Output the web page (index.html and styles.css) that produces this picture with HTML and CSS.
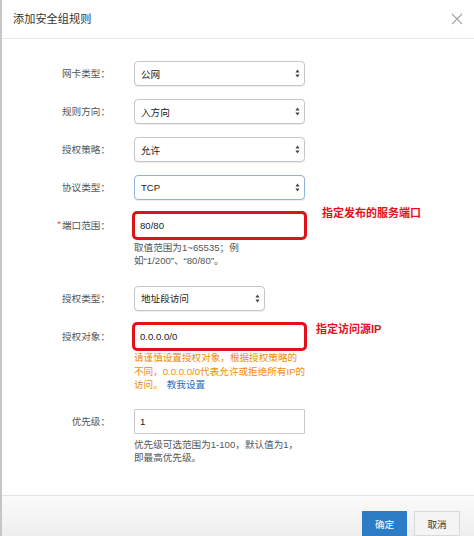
FILE: index.html
```html
<!DOCTYPE html>
<html lang="zh-CN">
<head>
<meta charset="utf-8">
<title>添加安全组规则</title>
<link rel="stylesheet" href="styles.css">
</head>
<body>
<div class="dialog">
  <div class="header">
    <span class="title">添加安全组规则</span>
    <svg class="close" width="12" height="12" viewBox="0 0 12 12"><path d="M1 1L11 11M11 1L1 11" stroke="#a8a8a8" stroke-width="1.2" fill="none"/></svg>
  </div>
  <div class="form">
    <div class="row">
      <div class="label">网卡类型：</div>
      <div class="field">
        <div class="select"><span>公网</span><svg class="arrows" width="5" height="9" viewBox="0 0 5 9"><path d="M0.4 3.4L2.5 0.4L4.6 3.4ZM0.4 5.6L2.5 8.6L4.6 5.6Z" fill="#444"/></svg></div>
      </div>
    </div>
    <div class="row">
      <div class="label">规则方向：</div>
      <div class="field">
        <div class="select"><span>入方向</span><svg class="arrows" width="5" height="9" viewBox="0 0 5 9"><path d="M0.4 3.4L2.5 0.4L4.6 3.4ZM0.4 5.6L2.5 8.6L4.6 5.6Z" fill="#444"/></svg></div>
      </div>
    </div>
    <div class="row">
      <div class="label">授权策略：</div>
      <div class="field">
        <div class="select"><span>允许</span><svg class="arrows" width="5" height="9" viewBox="0 0 5 9"><path d="M0.4 3.4L2.5 0.4L4.6 3.4ZM0.4 5.6L2.5 8.6L4.6 5.6Z" fill="#444"/></svg></div>
      </div>
    </div>
    <div class="row">
      <div class="label">协议类型：</div>
      <div class="field">
        <div class="select focus"><span>TCP</span><svg class="arrows" width="5" height="9" viewBox="0 0 5 9"><path d="M0.4 3.4L2.5 0.4L4.6 3.4ZM0.4 5.6L2.5 8.6L4.6 5.6Z" fill="#444"/></svg></div>
      </div>
    </div>
    <div class="row">
      <div class="label"><span class="req">*</span>端口范围：</div>
      <div class="field">
        <div class="line">
          <input class="input marked" type="text" value="80/80" readonly>
          <span class="note note-port">指定发布的服务端口</span>
        </div>
        <div class="help">取值范围为1~65535；例<br>如“1/200”、“80/80”。</div>
      </div>
    </div>
    <div class="row">
      <div class="label">授权类型：</div>
      <div class="field">
        <div class="select short"><span>地址段访问</span><svg class="arrows" width="5" height="9" viewBox="0 0 5 9"><path d="M0.4 3.4L2.5 0.4L4.6 3.4ZM0.4 5.6L2.5 8.6L4.6 5.6Z" fill="#444"/></svg></div>
      </div>
    </div>
    <div class="row">
      <div class="label">授权对象：</div>
      <div class="field">
        <div class="line">
          <input class="input marked" type="text" value="0.0.0.0/0" readonly>
          <span class="note note-ip">指定访问源IP</span>
        </div>
        <div class="help warn">请谨慎设置授权对象，根据授权策略的<br>不同，0.0.0.0/0代表允许或拒绝所有IP的<br>访问。<a class="link" href="#">教我设置</a></div>
      </div>
    </div>
    <div class="row">
      <div class="label">优先级：</div>
      <div class="field">
        <input class="input" type="text" value="1" readonly>
        <div class="help help-priority">优先级可选范围为1-100，默认值为1，<br>即最高优先级。</div>
      </div>
    </div>
  </div>
  <div class="footer">
    <button class="btn primary" type="button">确定</button>
    <button class="btn" type="button">取消</button>
  </div>
</div>
</body>
</html>
```

FILE: styles.css
```css
* {
  box-sizing: border-box;
}

html,
body {
  margin: 0;
  padding: 0;
}

body {
  font-family: "Liberation Sans", "Noto Sans CJK SC", sans-serif;
  font-size: 9.6px;
  color: #222;
  background: #fff;
}

.dialog {
  height: 536px;
  border-left: 2px solid #c6c6c6;
  display: flex;
  flex-direction: column;
  overflow: hidden;
}

.header {
  flex: none;
  height: 39px;
  border-bottom: 1px solid #e6e6e6;
  display: flex;
  align-items: center;
  justify-content: space-between;
  padding: 0 11px 2px 11px;
}

.title {
  font-size: 11.2px;
  color: #333;
}

.close {
  display: block;
  margin-top: 1px;
}

.form {
  flex: 1;
  padding-top: 22px;
}

.row {
  display: flex;
  margin-bottom: 13px;
}

.label {
  flex: none;
  width: 108px;
  text-align: right;
  line-height: 25px;
  color: #555;
  white-space: nowrap;
}

.req {
  color: #e4393c;
  margin-right: 1px;
  vertical-align: top;
  line-height: 22px;
}

.field {
  margin-left: 24px;
  display: flex;
  flex-direction: column;
  align-items: flex-start;
}

.select {
  width: 171px;
  height: 25px;
  border: 1px solid #c6c6c6;
  border-radius: 4px;
  background: #fff;
  display: flex;
  align-items: center;
  justify-content: space-between;
  padding: 0 4px 0 6px;
  box-shadow: 0 1px 1px rgba(0, 0, 0, 0.07);
  color: #222;
  white-space: nowrap;
}

.select.short {
  width: 131px;
}

.select.focus {
  border-color: #8db2de;
}

.arrows {
  display: block;
}

.line {
  display: flex;
  align-items: flex-start;
}

.input {
  display: block;
  width: 171px;
  height: 25px;
  margin: 0;
  border: 1px solid #c8c8c8;
  border-radius: 1px;
  padding: 0 5px;
  font: inherit;
  color: #222;
  background: #fff;
}

.input.marked {
  outline: 3px solid #e2101b;
  outline-offset: -1px;
  border-radius: 3px;
}

.note {
  font-size: 11px;
  font-weight: bold;
  line-height: 12px;
  color: #e30f1a;
  white-space: nowrap;
  text-shadow: -1px -1px 0 #fff, 1px -1px 0 #fff, -1px 1px 0 #fff, 1px 1px 0 #fff, 0 0 2px #e7a0a0;
}

.note-port {
  margin-left: 17px;
  margin-top: -6px;
}

.note-ip {
  margin-left: 11px;
  margin-top: -1px;
}

.help {
  color: #555;
  line-height: 13px;
  margin-top: 2.5px;
  margin-bottom: 6px;
  white-space: nowrap;
}

.help.warn {
  color: #f08c0a;
  line-height: 13.5px;
  margin-bottom: 4px;
}

.help-priority {
  margin-top: 4px;
}

.link {
  color: #1f6fc5;
  text-decoration: none;
  margin-left: 4px;
}

.footer {
  flex: none;
  height: 41px;
  border-top: 1px solid #e4e4e4;
  background: linear-gradient(#fbfbfb, #eeeeee);
  display: flex;
  justify-content: flex-end;
  align-items: flex-start;
  gap: 7px;
  padding: 15px 14px 0 0;
}

.btn {
  width: 46px;
  height: 25px;
  padding: 0;
  margin: 0;
  font: inherit;
  color: #333;
  background: #f4f4f4;
  border: 1px solid #d9d9d9;
  border-radius: 0;
}

.btn.primary {
  width: 45px;
  color: #fff;
  background: #2c7bc5;
  border-color: #2c7bc5;
}
```
